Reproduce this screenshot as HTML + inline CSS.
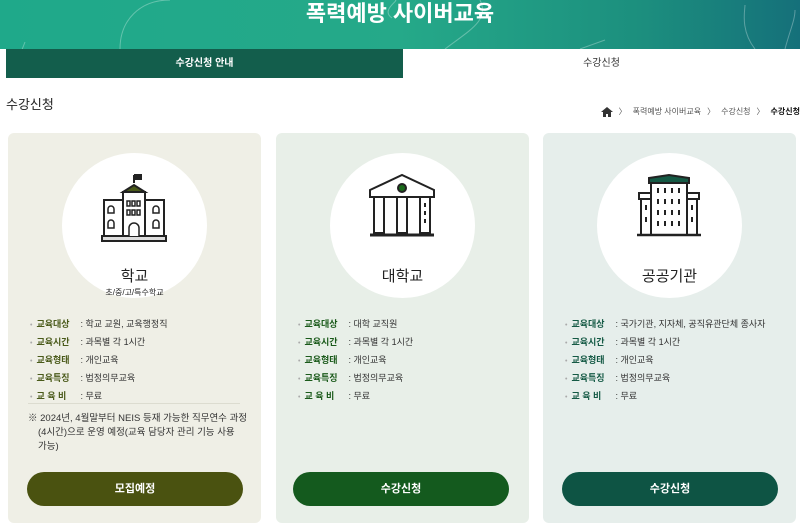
<!DOCTYPE html>
<html><head><meta charset="utf-8"><style>
*{margin:0;padding:0;box-sizing:border-box}
body{width:800px;height:514px;overflow:hidden;background:#fff;font-family:"Liberation Sans","Noto Sans CJK KR",sans-serif;position:relative;color:#222}
.hdr{position:absolute;left:0;top:0;width:800px;height:49px;background:linear-gradient(90deg,#1fa98a 0%,#25a989 50%,#1c8f7e 80%,#15707a 100%)}
.hdr h1{position:absolute;left:0;width:800px;text-align:center;top:0;font-size:22px;color:#fff;font-weight:bold;line-height:28px}
.tabl{position:absolute;left:6px;top:49px;width:397px;height:29px;background:#135e4c;color:#fff;font-size:10px;text-align:center;line-height:29px;font-weight:bold}
.tabr{position:absolute;left:403px;top:49px;width:397px;height:29px;background:#fff;color:#333;font-size:10px;text-align:center;line-height:29px}
.ttl{position:absolute;left:6px;top:94px;font-size:13px;color:#222}
.bc{position:absolute;right:0;top:106px;font-size:8px;color:#555;display:flex;align-items:center;gap:6px}
.bc b{color:#111}
.card{position:absolute;top:133px;width:253px;height:390px;border-radius:6px}
.circ{position:absolute;left:54px;top:20px;width:145px;height:145px;border-radius:50%;background:#fff;text-align:center}
.circ .n{position:absolute;width:100%;top:112px;font-size:15px;color:#222}
.circ .s{position:absolute;width:100%;top:134px;font-size:8px;color:#222}
.circ svg{position:absolute;left:39px;top:20px}
ul{position:absolute;left:22px;top:183px;list-style:none;font-size:9px;line-height:17px;color:#333}
li::before{content:"•";color:#aaa;margin-right:4px;font-size:7px}
li b{display:inline-block;width:44px;font-weight:bold}
.note{position:absolute;left:20px;top:270px;width:212px;font-size:9.5px;line-height:14px;color:#333;padding-left:10px;text-indent:-10px;border-top:1px solid #dcdcd0;padding-top:8px;white-space:nowrap}
.btn{position:absolute;left:19px;top:339px;width:216px;height:34px;border-radius:17px;color:#fff;font-size:11px;font-weight:bold;text-align:center;line-height:34px}
</style></head><body>
<div class="hdr">
<svg width="800" height="49" style="position:absolute;left:0;top:0" fill="none" stroke="rgba(255,255,255,.3)" stroke-width="1"><path d="M120 49 C120 20 140 0 170 0"/><path d="M18 60 L25 42"/><path d="M392 18 C380 10 400 0 395 0"/><path d="M445 49 C470 30 490 20 480 0"/><path d="M580 49 L605 40"/><path d="M755 49 C740 30 745 10 745 5"/><path d="M785 49 C790 30 795 20 795 10"/></svg>
<h1>폭력예방 사이버교육</h1></div>
<div class="tabl">수강신청 안내</div><div class="tabr">수강신청</div>
<div class="ttl">수강신청</div>
<div class="bc"><svg width="12" height="10" viewBox="0 0 12 10"><path d="M6 0 L12 5 H10 V10 H7 V7 H5 V10 H2 V5 H0Z" fill="#333"/></svg><span>〉</span>폭력예방 사이버교육<span>〉</span>수강신청<span>〉</span><b>수강신청</b></div>

<div class="card" style="left:8px;background:#efefe6">
<div class="circ"><svg width="66" height="70" viewBox="0 0 66 70" fill="#fff" stroke="#222" stroke-width="2"><path d="M33 2 V10" /><path d="M33 2 H40 V6 H33" fill="#222"/><path d="M22 19 L33 12 L44 19Z" fill="#4a5a1a"/><rect x="22" y="19" width="22" height="44"/><rect x="3" y="27" width="19" height="36"/><rect x="44" y="27" width="19" height="36"/><rect x="1" y="63" width="64" height="5" fill="#ddd"/><path d="M26 28 h3 v5 h-3z M31 28 h3 v5 h-3z M36 28 h3 v5 h-3z M26 37 h3 v5 h-3z M31 37 h3 v5 h-3z M36 37 h3 v5 h-3z M7 36 a3 3 0 0 1 6 0 v4 h-6z M52 36 a3 3 0 0 1 6 0 v4 h-6z M7 50 a3 3 0 0 1 6 0 v5 h-6z M52 50 a3 3 0 0 1 6 0 v5 h-6z M28 63 v-8 a5 5 0 0 1 10 0 v8" stroke-width="1.5"/></svg>
<div class="n">학교</div><div class="s">초/중/고/특수학교</div></div>
<ul><li><b style="color:#4a5a1a">교육대상</b>: 학교 교원, 교육행정직</li><li><b style="color:#4a5a1a">교육시간</b>: 과목별 각 1시간</li><li><b style="color:#4a5a1a">교육형태</b>: 개인교육</li><li><b style="color:#4a5a1a">교육특징</b>: 법정의무교육</li><li><b style="color:#4a5a1a">교 육 비</b>: 무료</li></ul>
<div class="note">※ 2024년, 4월말부터 NEIS 등재 가능한 직무연수 과정<br>(4시간)으로 운영 예정(교육 담당자 관리 기능 사용<br>가능)</div>
<div class="btn" style="background:#4a5210">모집예정</div></div>

<div class="card" style="left:276px;background:#e8efe8">
<div class="circ"><svg width="66" height="70" viewBox="0 0 66 70" fill="#fff" stroke="#222" stroke-width="2"><path d="M1 17 L33 2 L65 17 V24 H1Z"/><circle cx="33" cy="15" r="4" fill="#1a6a1a"/><rect x="5" y="24" width="10" height="36"/><rect x="28" y="24" width="10" height="36"/><rect x="51" y="24" width="10" height="36"/><path d="M1 62 H65" stroke-width="3"/><path d="M56 30 v4 M56 38 v4 M56 46 v4"/></svg>
<div class="n">대학교</div></div>
<ul><li><b style="color:#1a5a1a">교육대상</b>: 대학 교직원</li><li><b style="color:#1a5a1a">교육시간</b>: 과목별 각 1시간</li><li><b style="color:#1a5a1a">교육형태</b>: 개인교육</li><li><b style="color:#1a5a1a">교육특징</b>: 법정의무교육</li><li><b style="color:#1a5a1a">교 육 비</b>: 무료</li></ul>
<div class="btn" style="background:#145a1e;left:17px">수강신청</div></div>

<div class="card" style="left:543px;background:#e6eeeb">
<div class="circ"><svg width="66" height="70" viewBox="0 0 66 70" fill="#fff" stroke="#222" stroke-width="2"><path d="M13 5 L33 2 L53 5 V10 H13Z" fill="#155a45"/><rect x="15" y="10" width="36" height="52"/><path d="M3 20 H15 V26 H3Z M51 20 H63 V26 H51Z"/><rect x="5" y="26" width="10" height="36"/><rect x="51" y="26" width="10" height="36"/><path d="M1 62 H65" stroke-width="2.5"/><path d="M22 15v5M29 15v5M36 15v5M43 15v5M22 26v5M29 26v5M36 26v5M43 26v5M22 37v5M29 37v5M36 37v5M43 37v5M22 48v5M29 48v5M36 48v5M43 48v5M10 32v5M10 44v5M56 32v5M56 44v5"/></svg>
<div class="n">공공기관</div></div>
<ul><li><b style="color:#155a45">교육대상</b>: 국가기관, 지자체, 공직유관단체 종사자</li><li><b style="color:#155a45">교육시간</b>: 과목별 각 1시간</li><li><b style="color:#155a45">교육형태</b>: 개인교육</li><li><b style="color:#155a45">교육특징</b>: 법정의무교육</li><li><b style="color:#155a45">교 육 비</b>: 무료</li></ul>
<div class="btn" style="background:#0e5444">수강신청</div></div>
</body></html>
